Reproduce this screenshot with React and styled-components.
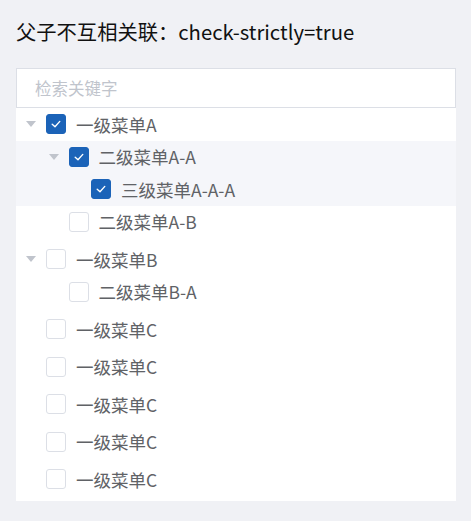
import React from 'react';
import styled, { createGlobalStyle } from 'styled-components';

const GlobalStyle = createGlobalStyle`
    html, body {
        margin: 0;
        padding: 0;
        background: #f0f1f5;
    }
    * {
        box-sizing: border-box;
    }
`;

const StyledPage = styled.div`
    padding: 17px 15px 20px 16px;
    font-family: "Noto Sans CJK SC", "Noto Sans", sans-serif;
    min-height: 521px;
`;

const StyledTitle = styled.div`
    font-size: 20.3px;
    line-height: 28px;
    color: #111;
    margin-bottom: 23px;
`;

const StyledPanel = styled.div`
    width: 440px;
    background: #fff;
`;

const StyledSearch = styled.input`
    display: block;
    width: 100%;
    height: 40px;
    border: 1px solid #dcdfe6;
    padding: 0 18px;
    font-family: inherit;
    font-size: 16.5px;
    color: #606266;
    outline: none;
    background: #fff;
    &::placeholder {
        color: #c0c4cc;
    }
`;

const StyledNode = styled.div`
    padding-bottom: ${(p) => (p.$top ? '5px' : '0')};
`;

const StyledRow = styled.div`
    display: flex;
    align-items: center;
    height: 32.5px;
    padding-left: ${(p) => p.$level * 22.5}px;
    background: ${(p) => (p.$active ? '#f5f6fa' : 'transparent')};
`;

const StyledCaret = styled.span`
    width: 30px;
    height: 100%;
    display: flex;
    align-items: center;
    justify-content: center;
    &::before {
        content: '';
        display: ${(p) => (p.$leaf ? 'none' : 'block')};
        border-top: 6px solid #c0c4cc;
        border-left: 5px solid transparent;
        border-right: 5px solid transparent;
    }
`;

const StyledBox = styled.span`
    width: 20px;
    height: 20px;
    border-radius: 3px;
    border: 1px solid ${(p) => (p.$checked ? '#1b63b8' : '#dcdfe6')};
    background: ${(p) => (p.$checked ? '#1b63b8' : '#fff')};
    display: flex;
    align-items: center;
    justify-content: center;
    margin-right: 10px;
    flex-shrink: 0;
`;

const StyledLabel = styled.span`
    font-size: 17.5px;
    color: #606266;
    white-space: nowrap;
`;

const tree = [
    {
        label: '一级菜单A',
        checked: true,
        children: [
            {
                label: '二级菜单A-A',
                checked: true,
                active: true,
                children: [{ label: '三级菜单A-A-A', checked: true, active: true }],
            },
            { label: '二级菜单A-B' },
        ],
    },
    {
        label: '一级菜单B',
        children: [{ label: '二级菜单B-A' }],
    },
    { label: '一级菜单C' },
    { label: '一级菜单C' },
    { label: '一级菜单C' },
    { label: '一级菜单C' },
    { label: '一级菜单C' },
];

function Check() {
    return (
        <svg width="12" height="12" viewBox="0 0 12 12">
            <polyline
                points="2.2,6.2 5,8.8 9.8,3.4"
                fill="none"
                stroke="#fff"
                strokeWidth="1.4"
                strokeLinecap="round"
                strokeLinejoin="round"
            />
        </svg>
    );
}

function TreeNode({ node, level }) {
    const leaf = !node.children;
    return (
        <StyledNode $top={level === 0}>
            <StyledRow $level={level} $active={node.active}>
                <StyledCaret $leaf={leaf} />
                <StyledBox $checked={node.checked}>{node.checked && <Check />}</StyledBox>
                <StyledLabel>{node.label}</StyledLabel>
            </StyledRow>
            {node.children &&
                node.children.map((child, i) => (
                    <TreeNode key={i} node={child} level={level + 1} />
                ))}
        </StyledNode>
    );
}

export default function App() {
    return (
        <StyledPage>
            <GlobalStyle />
            <StyledTitle>父子不互相关联：check-strictly=true</StyledTitle>
            <StyledPanel>
                <StyledSearch placeholder="检索关键字" />
                {tree.map((node, i) => (
                    <TreeNode key={i} node={node} level={0} />
                ))}
            </StyledPanel>
        </StyledPage>
    );
}
